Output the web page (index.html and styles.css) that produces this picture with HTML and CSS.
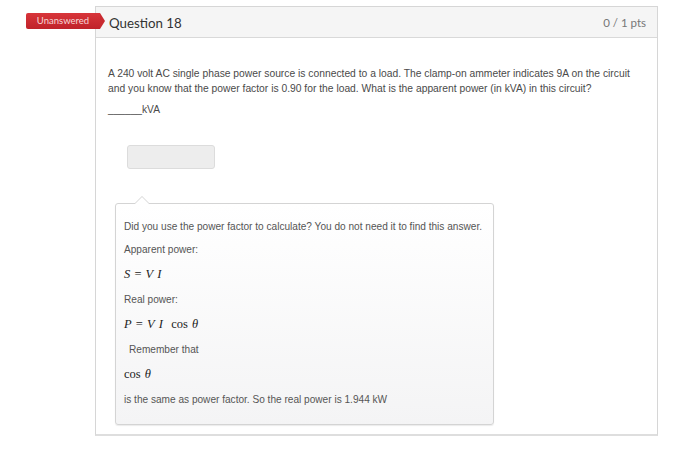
FILE: index.html
```html
<!DOCTYPE html>
<html>
<head>
<meta charset="utf-8">
<link rel="stylesheet" href="styles.css">
</head>
<body>
<div class="page">
  <div class="question">
    <div class="badge">Unanswered</div>
    <div class="qheader">
      <span class="qtitle">Question 18</span>
      <span class="pts">0 / 1 pts</span>
    </div>
    <div class="qbody">
      <p class="qtext">A 240 volt AC single phase power source is connected to a load. The clamp-on ammeter indicates 9A on the circuit and you know that the power factor is 0.90 for the load. What is the apparent power (in kVA) in this circuit?</p>
      <p class="blank">______kVA</p>
      <div class="answer"></div>
      <div class="feedback">
        <p class="fb first">Did you use the power factor to calculate? You do not need it to find this answer.</p>
        <p class="fb">Apparent power:</p>
        <p class="math"><i>S</i> = <i>V</i> <i>I</i></p>
        <p class="fb">Real power:</p>
        <p class="math"><i>P</i> = <i>V</i> <i>I</i>&nbsp; cos <i>θ</i></p>
        <p class="fb indent">Remember that</p>
        <p class="math">cos <i>θ</i></p>
        <p class="fb">is the same as power factor. So the real power is 1.944 kW</p>
      </div>
    </div>
  </div>
</div>
</body>
</html>
```

FILE: styles.css
```css
html, body {
  margin: 0;
  padding: 0;
  background: #fff;
}
.page {
  width: 700px;
  height: 453px;
  position: relative;
  padding: 6px 0 0 95px;
  box-sizing: border-box;
}
.question {
  width: 563px;
  height: 430px;
  box-sizing: border-box;
  border: 1px solid #d6d6d6;
  border-bottom: 2px solid #dedede;
}
.badge {
  position: absolute;
  left: 26px;
  top: 13px;
  width: 74px;
  height: 16px;
  background: linear-gradient(#d8353a, #c0222a);
  color: #f6d5d5;
  font-family: Lato, sans-serif;
  font-size: 9.5px;
  line-height: 16px;
  text-align: center;
  border-radius: 2px 0 0 2px;
}
.badge::after {
  content: "";
  position: absolute;
  right: -5px;
  top: 0;
  border-top: 8px solid transparent;
  border-bottom: 8px solid transparent;
  border-left: 5px solid #c92a30;
}
.qheader {
  height: 30px;
  background: #f5f5f5;
  border-bottom: 1px solid #d9d9d9;
  display: flex;
  align-items: center;
  justify-content: space-between;
  padding: 0 11px 0 13px;
  font-family: Lato, sans-serif;
}
.qtitle {
  font-size: 13.3px;
  color: #333;
  padding-top: 1px;
}
.pts {
  font-size: 11.5px;
  color: #777;
  padding-top: 1px;
}
.qbody {
  padding: 28px 12px 0 12px;
  font-family: "Liberation Sans", Arial, sans-serif;
  color: #4a4a4a;
}
.qtext {
  margin: 0;
  max-width: 528px;
  font-size: 10.3px;
  line-height: 15px;
}
.blank {
  margin: 6px 0 0 0;
  font-size: 10.2px;
  line-height: 15px;
}
.answer {
  margin: 28px 0 0 19px;
  width: 86px;
  height: 22px;
  background: #ededed;
  border: 1px solid #dcdcdc;
  border-radius: 3px;
}
.feedback {
  position: relative;
  margin: 34px 0 0 7px;
  width: 379px;
  height: 222px;
  box-sizing: border-box;
  border: 1px solid #d4d4d4;
  border-radius: 3px;
  background: linear-gradient(#ffffff, #f4f4f5);
  box-shadow: 0 1px 1px rgba(0,0,0,0.08);
  padding: 15px 2px 0 8px;
}
.feedback::before {
  content: "";
  position: absolute;
  left: 18px;
  top: -8px;
  width: 0;
  height: 0;
  border-left: 8px solid transparent;
  border-right: 8px solid transparent;
  border-bottom: 8px solid #d4d4d4;
}
.feedback::after {
  content: "";
  position: absolute;
  left: 19px;
  top: -7px;
  width: 0;
  height: 0;
  border-left: 7px solid transparent;
  border-right: 7px solid transparent;
  border-bottom: 7px solid #fff;
}
.fb {
  margin: 0;
  font-size: 10.1px;
  line-height: 15px;
  height: 25px;
  white-space: nowrap;
  color: #555;
}
.fb.first {
  height: 23px;
}
.indent {
  padding-left: 5px;
}
.math {
  margin: 0;
  height: 25px;
  font-family: "Liberation Serif", "Times New Roman", serif;
  font-size: 12.5px;
  line-height: 15px;
  color: #222;
  word-spacing: 1px;
}
.math i {
  font-style: italic;
}
```
